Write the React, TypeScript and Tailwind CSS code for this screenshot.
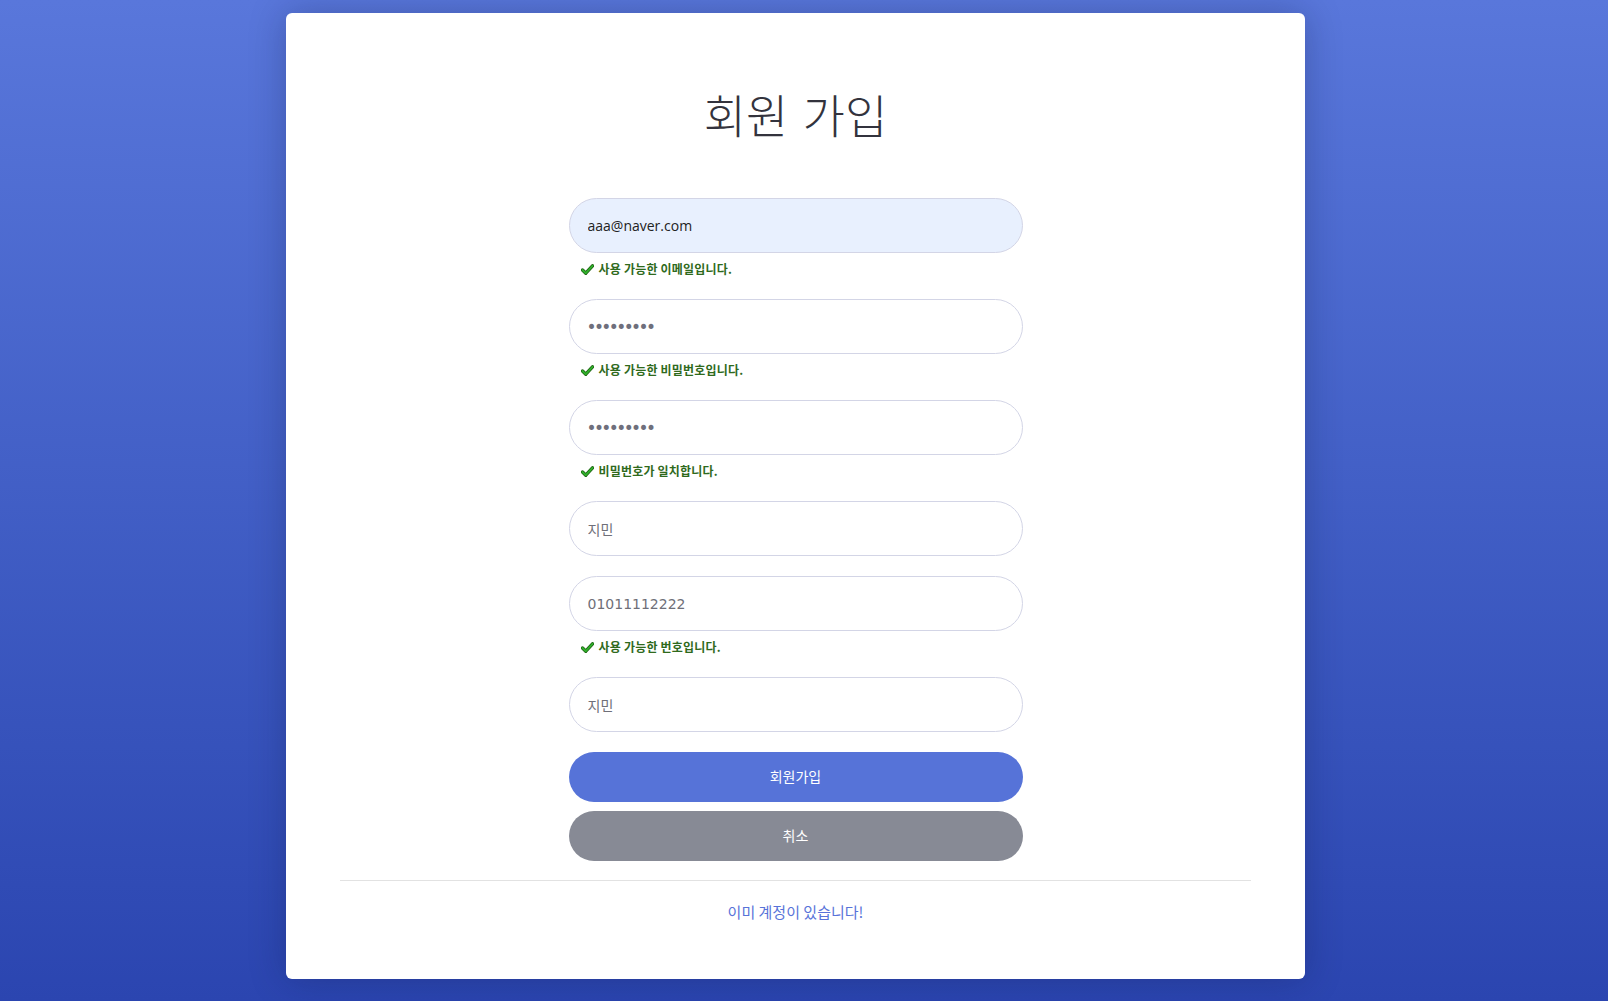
import React from 'react';

const kr = "font-['Noto_Sans_CJK_KR',sans-serif]";

const Check: React.FC = () => (
    <svg width="13" height="11" viewBox="0 0 13 11" className="shrink-0">
        <path d="M1.5 6 L4.8 9.2 L11.5 1.8" fill="none" stroke="#1d5e12" strokeWidth="3.4" strokeLinecap="round" strokeLinejoin="round" />
        <path d="M1.5 6 L4.8 9.2 L11.5 1.8" fill="none" stroke="#2fae2a" strokeWidth="2" strokeLinecap="round" strokeLinejoin="round" />
    </svg>
);

interface FieldProps {
    type?: string;
    value: string;
    autofill?: boolean;
    message?: string;
}

const Field: React.FC<FieldProps> = ({ type = 'text', value, autofill, message }) => {
    let cls = "block w-full h-[55px] rounded-full border border-[#d3d5e6] bg-white px-[18px] text-[14px] text-[#6f6f78] outline-none font-['DejaVu_Sans','Noto_Sans_CJK_KR',sans-serif]";
    if (autofill) {
        cls = "block w-full h-[55px] rounded-full border border-[#d3d5e6] bg-[#e8f0fe] px-[18px] text-[14px] text-[#222] outline-none font-['Open_Sans','Noto_Sans_CJK_KR',sans-serif]";
    } else if (type === 'password') {
        cls = "block w-full h-[55px] rounded-full border border-[#d3d5e6] bg-white px-[17px] text-[17px] tracking-[-2.6px] text-[#6f6f7c] outline-none font-['DejaVu_Sans',sans-serif]";
    }
    return (
        <div className="mb-5">
            <input type={type} defaultValue={value} readOnly className={cls} />
            {message && (
                <div className="mt-[6px] h-[20px] flex items-center gap-[5px] pl-[12px]">
                    <Check />
                    <span className={`${kr} text-[12px] font-semibold tracking-[0.2px] text-[#2f6a1c] leading-[20px]`}>{message}</span>
                </div>
            )}
        </div>
    );
};

export default function App() {
    return (
        <div className="min-h-[1001px] w-full bg-gradient-to-b from-[#5977db] to-[#2b45b0]">
            <div className="w-[1591px] pt-[13px] pb-[22px]">
                <div className="mx-auto w-[1019px] h-[966px] bg-white rounded-md shadow-[0_0_36px_rgba(10,20,60,0.28)] pt-[77px]">
                    <h1 className={`${kr} text-center text-[46px] leading-[46px] font-light tracking-[0px] [word-spacing:4px] text-[#33333d]`}>회원 가입</h1>

                    <form className="mx-auto mt-[62px] w-[454px]">
                        <Field value="aaa@naver.com" autofill message="사용 가능한 이메일입니다." />
                        <Field type="password" value="123456789" message="사용 가능한 비밀번호입니다." />
                        <Field type="password" value="123456789" message="비밀번호가 일치합니다." />
                        <Field value="지민" />
                        <Field value="01011112222" message="사용 가능한 번호입니다." />
                        <Field value="지민" />

                        <button type="button" className={`${kr} block w-full h-[50px] rounded-full bg-[#5673d8] text-white text-[14px] leading-[20px] pb-[3px]`}>
                            회원가입
                        </button>
                        <button type="button" className={`${kr} mt-[9px] block w-full h-[50px] rounded-full bg-[#878a95] text-white text-[14px] leading-[20px] pb-[3px]`}>
                            취소
                        </button>
                    </form>

                    <div className="mx-[54px] mt-[19px] border-t border-[#e2e2e2]" />
                    <p className={`${kr} mt-[21px] text-center text-[15px] leading-[20px] text-[#5873d9]`}>이미 계정이 있습니다!</p>
                </div>
            </div>
        </div>
    );
}
